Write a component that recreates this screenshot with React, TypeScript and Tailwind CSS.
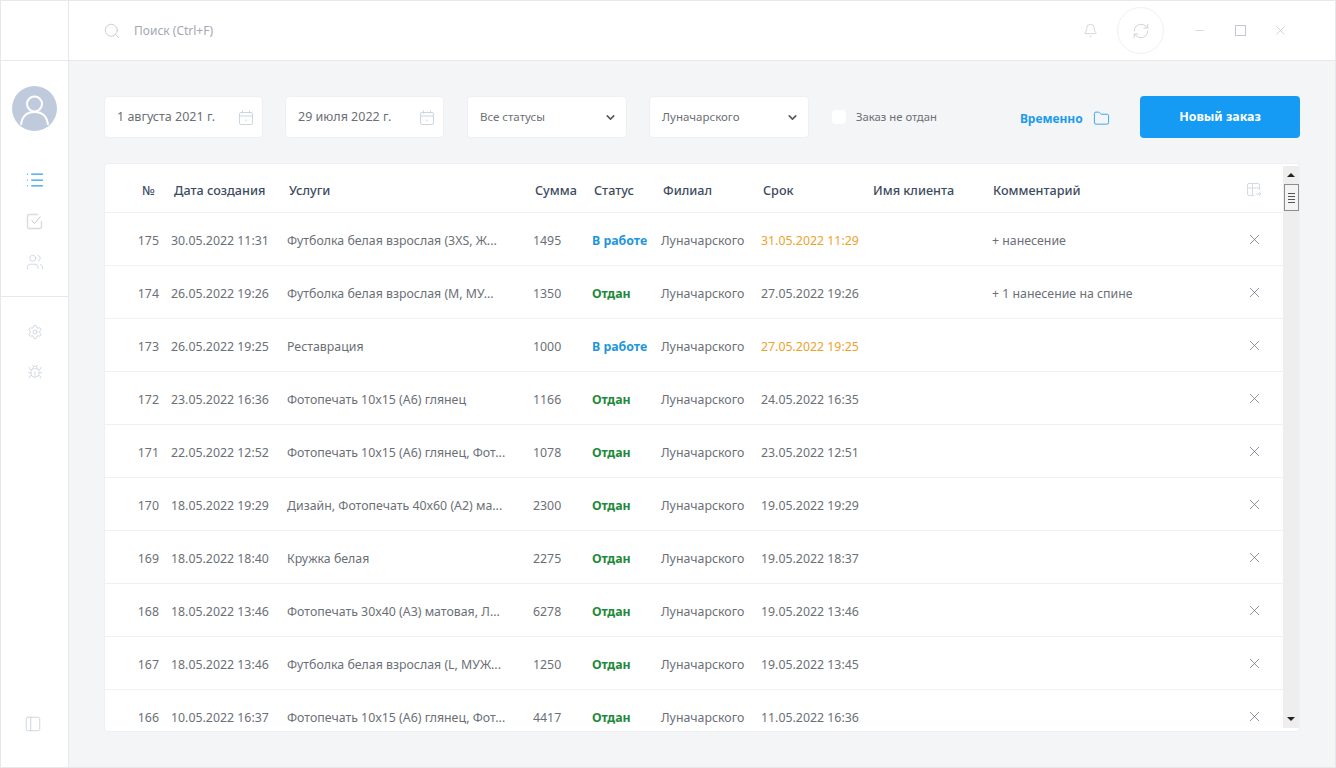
import { Bell, Bug, ChevronDown, Folder, List, Minus, PanelLeft, RefreshCw, Search, Settings, Users, X } from 'lucide-react';

const orders = [
  { id: 175, created: '30.05.2022 11:31', services: 'Футболка белая взрослая (3XS, Ж...', sum: 1495, working: true, due: '31.05.2022 11:29', comment: '+ нанесение' },
  { id: 174, created: '26.05.2022 19:26', services: 'Футболка белая взрослая (M, МУ...', sum: 1350, working: false, due: '27.05.2022 19:26', comment: '+ 1 нанесение на спине' },
  { id: 173, created: '26.05.2022 19:25', services: 'Реставрация', sum: 1000, working: true, due: '27.05.2022 19:25', comment: '' },
  { id: 172, created: '23.05.2022 16:36', services: 'Фотопечать 10x15 (A6) глянец', sum: 1166, working: false, due: '24.05.2022 16:35', comment: '' },
  { id: 171, created: '22.05.2022 12:52', services: 'Фотопечать 10x15 (A6) глянец, Фот...', sum: 1078, working: false, due: '23.05.2022 12:51', comment: '' },
  { id: 170, created: '18.05.2022 19:29', services: 'Дизайн, Фотопечать 40x60 (A2) ма...', sum: 2300, working: false, due: '19.05.2022 19:29', comment: '' },
  { id: 169, created: '18.05.2022 18:40', services: 'Кружка белая', sum: 2275, working: false, due: '19.05.2022 18:37', comment: '' },
  { id: 168, created: '18.05.2022 13:46', services: 'Фотопечать 30x40 (A3) матовая, Л...', sum: 6278, working: false, due: '19.05.2022 13:46', comment: '' },
  { id: 167, created: '18.05.2022 13:46', services: 'Футболка белая взрослая (L, МУЖ...', sum: 1250, working: false, due: '19.05.2022 13:45', comment: '' },
  { id: 166, created: '10.05.2022 16:37', services: 'Фотопечать 10x15 (A6) глянец, Фот...', sum: 4417, working: false, due: '11.05.2022 16:36', comment: '' },
];

const CalendarIcon = () => (
  <svg width="14" height="15" viewBox="0 0 14 15" fill="none" stroke="#cbd5e1" strokeWidth="1" className="ml-auto">
    <rect x="0.5" y="2.5" width="13" height="12" rx="1.5" />
    <path d="M0.5 6h13M3.5 0.5v3M10.5 0.5v3M7 9.5v2" />
  </svg>
);

const DateField = ({ value, className }: { value: string; className: string }) => (
  <div className={`flex h-[42px] w-[159px] items-center rounded border border-[#eef0f3] bg-white pl-3 pr-[9px] text-[12.5px] text-[#6b6f76] ${className}`}>
    {value}
    <CalendarIcon />
  </div>
);

const SelectField = ({ value, className }: { value: string; className: string }) => (
  <div className={`flex h-[42px] w-[160px] items-center justify-between rounded border border-[#eef0f3] bg-white pl-3 pr-[9px] text-[11.5px] text-[#6b6f76] ${className}`}>
    {value}
    <ChevronDown size={13} strokeWidth={3} className="text-[#555b63]" />
  </div>
);

const App = () => (
  <div className="flex h-[768px] w-[1336px] overflow-hidden border border-[#e6e8ec] bg-[#f4f5f7] font-['Noto_Sans',sans-serif]">
    <aside className="flex w-[68px] shrink-0 flex-col border-r border-[#e6e8ec] bg-white">
      <div className="h-[60px] shrink-0 border-b border-[#e6e8ec]" />
      <div className="flex h-[236px] shrink-0 flex-col items-center border-b border-[#e6e8ec] pt-[25px]">
        <svg width="45" height="45" viewBox="0 0 45 45" className="shrink-0">
          <circle cx="22.5" cy="22.5" r="22.5" fill="#bfcbdd" />
          <circle cx="22.5" cy="18" r="7.500" fill="none" stroke="#fff" strokeWidth="2" />
          <path d="M9 39c1-9 6.500-13 13.500-13s12.500 4 13.500 13" fill="none" stroke="#fff" strokeWidth="2" />
        </svg>
        <List size={20} strokeWidth={1.5} className="mt-[39px] text-[#2f9fe8]" />
        <svg width="17" height="17" viewBox="0 0 17 17" fill="none" stroke="#d8dbe1" strokeWidth="1.4" className="mt-[23px]">
          <path d="M15.500 8v6a1.500 1.500 0 0 1-1.500 1.500H3A1.500 1.500 0 0 1 1.500 14V3A1.500 1.500 0 0 1 3 1.500h9" />
          <path d="M5.500 7.500l3 3 6-7" stroke="#c3c8d0" strokeWidth="1" />
        </svg>
        <Users size={18} strokeWidth={1} className="mt-[23px] text-[#c3cfdf]" />
      </div>
      <div className="flex flex-col items-center pt-[27px]">
        <Settings size={16} strokeWidth={1.1} className="text-[#c3cbd8]" />
        <Bug size={16} strokeWidth={1} className="mt-[24px] text-[#c3cbd8]" />
      </div>
      <div className="mt-auto flex justify-center pb-[34px] pr-[3px]">
        <PanelLeft size={18} strokeWidth={1.3} className="text-[#cfd5de]" />
      </div>
    </aside>

    <main className="flex min-w-0 flex-1 flex-col">
      <header className="flex h-[60px] shrink-0 items-center border-b border-[#e6e8ec] bg-white pl-[34px]">
        <Search size={18} strokeWidth={1} className="text-[#b9bfc8]" />
        <span className="ml-[13px] text-[12px] text-[#a3a8b0]">Поиск (Ctrl+F)</span>
        <div className="ml-auto flex items-center pr-[47px]">
          <Bell size={15} strokeWidth={1.1} className="text-[#bcc6d3]" />
          <div className="ml-[19px] flex h-[47px] w-[47px] items-center justify-center rounded-full border border-[#eef0f3]">
            <RefreshCw size={18} strokeWidth={1.1} className="text-[#c3c9d2]" />
          </div>
          <Minus size={13} strokeWidth={1} className="ml-[29px] text-[#b7bdc6]" />
          <div className="ml-[29px] h-[11px] w-[11px] border border-[#c3c9d2]" />
          <X size={15} strokeWidth={1} className="ml-[27px] text-[#b7bdc6]" />
        </div>
      </header>

      <div className="flex min-h-0 flex-1 flex-col pb-[35px] pl-[35px] pr-[35px] pt-[35px]">
        <div className="flex h-[42px] shrink-0 items-center">
          <DateField value="1 августа 2021 г." className="" />
          <DateField value="29 июля 2022 г." className="ml-[22px]" />
          <SelectField value="Все статусы" className="ml-[23px]" />
          <SelectField value="Луначарского" className="ml-[22px]" />
          <div className="ml-[23px] h-[14px] w-[14px] rounded-[4px] bg-white" />
          <span className="ml-[10px] text-[11.3px] text-[#6b6f76]">Заказ не отдан</span>
          <span className="ml-[83px] pt-[3px] text-[12px] font-bold text-[#1b9bef]">Временно</span>
          <Folder size={17} strokeWidth={1.2} className="ml-[10px] mt-[2px] text-[#1b9bef]" />
          <button className="ml-auto h-[42px] w-[160px] rounded bg-[#159bf3] text-[12.4px] font-bold text-white">Новый заказ</button>
        </div>

        <section className="mt-[25px] flex min-h-0 flex-1 overflow-hidden rounded border border-[#eef0f3] bg-white">
          <div className="min-w-0 flex-1">
            <div className="flex h-[49px] items-center border-b border-[#eef0f3] pt-[4px] text-[12.65px] font-medium text-[#3d4b5f]">
              <span className="w-[50px] text-right">№</span>
              <span className="ml-[19px] w-[115px]">Дата создания</span>
              <span className="w-[246px]">Услуги</span>
              <span className="w-[59px]">Сумма</span>
              <span className="w-[69px]">Статус</span>
              <span className="w-[100px]">Филиал</span>
              <span className="w-[110px]">Срок</span>
              <span className="w-[120px]">Имя клиента</span>
              <span className="w-[254px]">Комментарий</span>
              <svg width="14" height="14" viewBox="0 0 14 14" fill="none" stroke="#d3dbe6" strokeWidth="1">
                <path d="M12.500 7V2a1.500 1.500 0 0 0-1.500-1.500H2A1.500 1.500 0 0 0 .5 2v9A1.500 1.500 0 0 0 2 12.500h5M.5 5h12M5.500.5v12M9 11h5M12 9l2 2-2 2" />
              </svg>
            </div>
            {orders.map((order) => (
              <div key={order.id} className="flex h-[53px] items-center border-b border-[#eef0f3] pt-[4px] text-[12.35px] text-[#6b6f76]">
                <span className="w-[54px] text-right">{order.id}</span>
                <span className="ml-[12px] w-[116px]">{order.created}</span>
                <span className="w-[246px]">{order.services}</span>
                <span className="w-[59px]">{order.sum}</span>
                <span className={`w-[69px] font-bold ${order.working ? 'text-[#1f96dc]' : 'text-[#1f8a3c]'}`}>{order.working ? 'В работе' : 'Отдан'}</span>
                <span className="w-[100px]">Луначарского</span>
                <span className={`w-[110px] ${order.working ? 'text-[#eda32b]' : ''}`}>{order.due}</span>
                <span className="w-[121px]" />
                <span className="w-[254px]">{order.comment}</span>
                <X size={17} strokeWidth={1} className="-mt-[4px] text-[#5f6b7a]" />
              </div>
            ))}
          </div>
          <div className="mb-[3px] mt-[2px] flex w-[16px] shrink-0 flex-col items-center bg-[#eeeeee]">
            <div className="mt-[7px] h-0 w-0 border-x-[4px] border-b-[4px] border-x-transparent border-b-[#222]" />
            <div className="mt-[7px] flex h-[27px] w-[15px] flex-col items-center justify-center gap-[2px] border border-[#8c8c8c] bg-[#f4f4f4]">
              <div className="h-px w-[7px] bg-[#555]" />
              <div className="h-px w-[7px] bg-[#555]" />
              <div className="h-px w-[7px] bg-[#555]" />
              <div className="h-px w-[7px] bg-[#555]" />
            </div>
            <div className="mb-[7px] mt-auto h-0 w-0 border-x-[4px] border-t-[4px] border-x-transparent border-t-[#222]" />
          </div>
        </section>
      </div>
    </main>
  </div>
);

export default App;
